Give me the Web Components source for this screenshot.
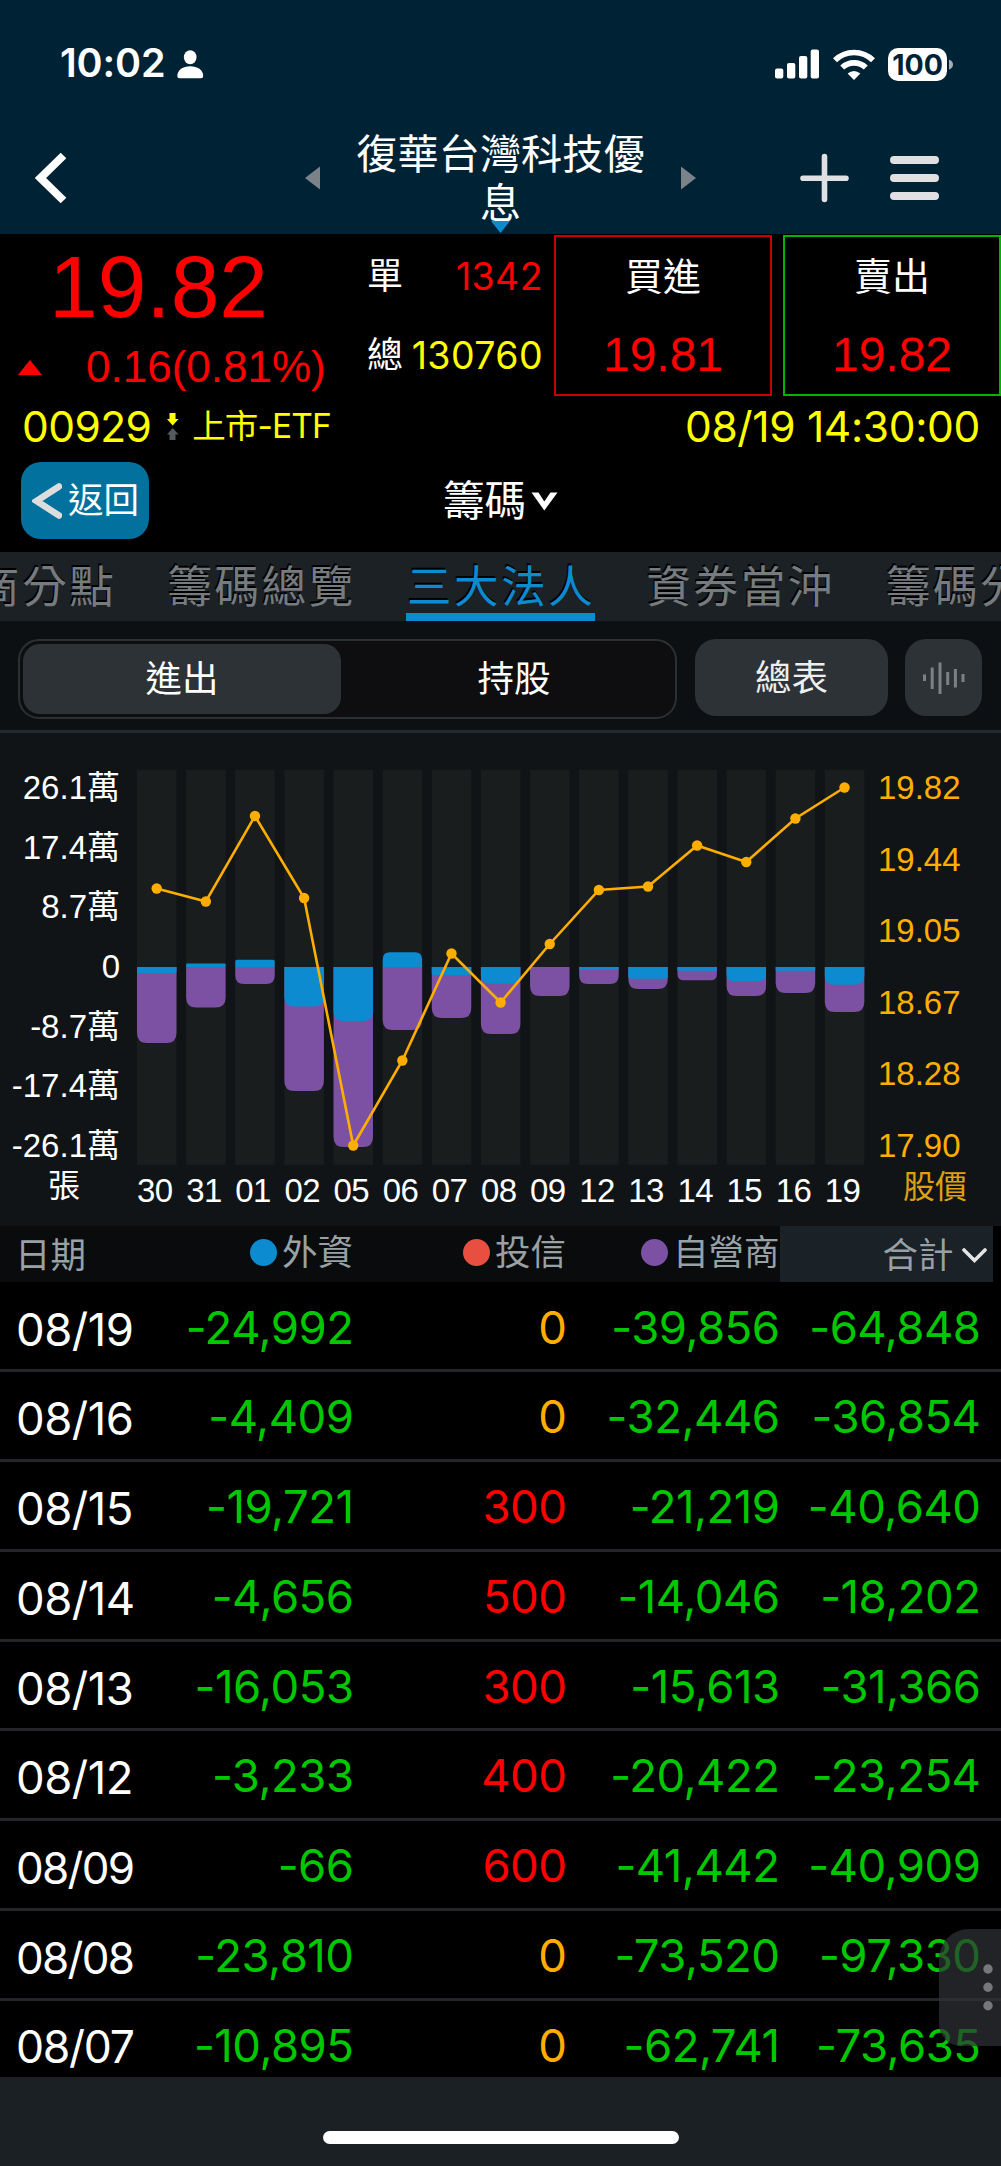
<!DOCTYPE html>
<html lang="zh-Hant">
<head>
<meta charset="utf-8">
<title>00929</title>
<style>
    body {
        margin: 0;
        width: 1001px;
        height: 2166px;
        overflow: hidden;
        background: #000;
        color: #fff;
        font-family: Inter, "Noto Sans CJK TC", sans-serif;
        font-size: 36px;
        line-height: 1;
    }
</style>
</head>
<body>
<stock-app></stock-app>

<script>
// Shared by all elements: make the template, attach the root, clone
const define = (name, html, setup) => {
    const template = document.createElement("template");
    template.innerHTML = html;

    customElements.define(name, class extends HTMLElement {
        constructor() {
            super();
            this.attachShadow({mode: "open"});
            this.shadowRoot.append(template.content.cloneNode(true));
        }

        connectedCallback() {
            if (setup) setup(this, this.shadowRoot);
        }
    });
};

define("status-bar", `
    <style>
        :host {
            display: flex;
            align-items: center;
            height: 128px;
            padding: 0 48px 0 60px;
        }
        .time {
            font-size: 39.5px;
            font-weight: 600;
            letter-spacing: -0.1px;
        }
        .person { margin-left: 11px; }
        .right {
            display: flex;
            align-items: center;
            margin-left: auto;
        }
        .wifi { margin: 0 13px 0 14px; }
        .battery {
            width: 59px;
            height: 33px;
            border-radius: 10px;
            background: #fff;
            color: #002235;
            font-size: 28.5px;
            font-weight: 700;
            line-height: 33px;
            text-align: center;
        }
        .cap { margin-left: 2px; }
        svg { display: block; }
    </style>
    <span class="time">10:02</span>
    <svg class="person" width="27" height="29" viewBox="0 0 27 29" fill="#fff">
        <ellipse cx="13.2" cy="7.3" rx="6.3" ry="7"/>
        <path d="M0.3 26C0.3 20 6 16.3 13.2 16.3S26.2 20 26.2 26Q26.2 28.3 24 28.3H2.5Q0.3 28.3 0.3 26Z"/>
    </svg>
    <div class="right">
        <svg width="44" height="30" viewBox="0 0 44 30" fill="#fff">
            <rect x="0" y="19.5" width="8.3" height="10" rx="2"/>
            <rect x="12" y="14" width="8.3" height="15.5" rx="2"/>
            <rect x="24" y="7" width="8.3" height="22.5" rx="2"/>
            <rect x="35.7" y="0.5" width="8.3" height="29" rx="2"/>
        </svg>
        <svg class="wifi" width="42" height="31" viewBox="0 0 42 31" fill="none" stroke="#fff">
            <path d="M2 11.3A27 27 0 0 1 40 11.3" stroke-width="5.6"/>
            <path d="M9.2 18.6A17 17 0 0 1 32.8 18.6" stroke-width="5.6"/>
            <path d="M21 31L14.6 24.6Q21 19.4 27.4 24.6Z" fill="#fff" stroke="none"/>
        </svg>
        <div class="battery">100</div>
        <svg class="cap" width="4" height="11" viewBox="0 0 4 11"><path d="M0 0.5Q4 2 4 5.5T0 10.5Z" fill="#a3aeb5"/></svg>
    </div>
`);

define("nav-bar", `
    <style>
        :host {
            display: grid;
            grid-template-columns: 1fr auto 1fr;
            align-items: center;
            box-sizing: border-box;
            height: 106px;
            padding: 0 62px 8px 35px;
        }
        svg { display: block; }
        .mid {
            display: flex;
            align-items: center;
            margin-left: 27px;
        }
        .title {
            position: relative;
            width: 293px;
            margin: 0 34px;
            padding-top: 2px;
            font-size: 41.2px;
            line-height: 49px;
            text-align: center;
        }
        .marker {
            position: absolute;
            left: 137px;
            top: 93px;
        }
        .right {
            display: flex;
            align-items: center;
            justify-content: flex-end;
            gap: 41px;
        }
    </style>
    <svg width="33" height="52" viewBox="0 0 33 52"><path d="M28.5 3.5L5.5 26L28.5 48.5" fill="none" stroke="#fff" stroke-width="8"/></svg>
    <div class="mid">
        <svg width="15" height="24"><path d="M15 0.5V23.5L0 12Z" fill="#7c8388"/></svg>
        <div class="title"><slot></slot>
            <svg class="marker" width="19" height="12"><path d="M0 0H19L9.5 12Z" fill="#0d8bd0"/></svg>
        </div>
        <svg width="15" height="24"><path d="M0 0.5V23.5L15 12Z" fill="#7c8388"/></svg>
    </div>
    <div class="right">
        <svg width="49" height="50" viewBox="0 0 49 50" stroke="#e0e0e2" stroke-width="5.6" stroke-linecap="round"><path d="M24.5 3.5V46.5M3 25.3H46"/></svg>
        <svg width="49" height="46" viewBox="0 0 49 46" stroke="#e0e0e2" stroke-width="8" stroke-linecap="round"><path d="M4 5H45M4 23H45M4 41H45"/></svg>
    </div>
`);

define("quote-box", `
    <style>
        :host {
            display: flex;
            flex-direction: column;
            align-items: center;
            box-sizing: border-box;
            height: 161px;
            padding-top: 15px;
            border: 2px solid var(--edge);
        }
        .label {
            font-size: 38px;
            line-height: 48px;
        }
        .price {
            margin-top: 29px;
            color: #f00;
            font: 48px/52px "Liberation Sans", sans-serif;
        }
    </style>
    <span class="label"><slot name="label"></slot></span>
    <span class="price"><slot></slot></span>
`);

define("quote-panel", `
    <style>
        :host { display: block; }
        .top {
            display: grid;
            grid-template-columns: 354px 178px 218px 218px;
            column-gap: 11px;
            width: 1001px;
            height: 163px;
        }
        .last {
            color: #f00;
            font-family: "Liberation Sans", sans-serif;
            white-space: nowrap;
        }
        .price {
            padding: 8px 0 0 49px;
            font-size: 87.5px;
            line-height: 90px;
        }
        .change {
            display: flex;
            align-items: center;
            gap: 44px;
            margin-top: 10px;
            padding-left: 18px;
            font-size: 44px;
            line-height: 50px;
        }
        .volume { margin-left: 2px; }
        .volume div {
            display: flex;
            justify-content: space-between;
            height: 79px;
            line-height: 85px;
            font-size: 37.5px;
        }
        .volume .n { letter-spacing: 0.4px; }
        .volume .k { font-size: 36px; }
        .r { color: #f00; }
        .y { color: #ff0; }
        .info {
            display: flex;
            align-items: center;
            height: 60px;
            padding: 0 21px 0 22px;
            color: #ff0;
            font-size: 42.5px;
            letter-spacing: -0.6px;
        }
        .market {
            font-size: 33.5px;
            letter-spacing: -0.9px;
        }
        .arrows { margin: 0 13px 0 16px; }
        .when {
            margin-left: auto;
            letter-spacing: -0.35px;
        }
        quote-box { margin-top: 1px; }
    </style>
    <div class="top">
        <div class="last">
            <div class="price">19.82</div>
            <div class="change">
                <svg width="24" height="15"><path d="M0 15L12 0L24 15Z" fill="#f00"/></svg>
                <span>0.16(0.81%)</span>
            </div>
        </div>
        <div class="volume">
            <div><span class="k">單</span><span class="n r">1342</span></div>
            <div><span class="k">總</span><span class="n y">130760</span></div>
        </div>
        <quote-box style="--edge: #c80000"><span slot="label">買進</span>19.81</quote-box>
        <quote-box style="--edge: #00b400"><span slot="label">賣出</span>19.82</quote-box>
    </div>
    <div class="info">
        <span>00929</span>
        <svg class="arrows" width="12" height="28" viewBox="0 0 12 28">
            <path d="M2.5 0H8.5V6H11.5L5.7 12.5L0 6H2.5Z" fill="#ff0"/>
            <path d="M5.7 15L11.5 21.5H8.5V27H2.5V21.5H0Z" fill="#55595c"/>
        </svg>
        <span class="market">上市-ETF</span>
        <span class="when">08/19 14:30:00</span>
    </div>
`);

define("page-bar", `
    <style>
        :host {
            display: grid;
            grid-template-columns: 1fr auto 1fr;
            align-items: start;
            height: 90px;
            padding: 5px 21px 0;
        }
        .back {
            display: flex;
            align-items: center;
            gap: 6px;
            box-sizing: border-box;
            width: 128px;
            height: 77px;
            padding-left: 11px;
            border-radius: 20px;
            background: #02719d;
            font-size: 35.5px;
        }
        .title {
            display: flex;
            align-items: center;
            gap: 5px;
            height: 79px;
            font-size: 41.5px;
        }
        svg { flex: none; }
    </style>
    <div class="back">
        <svg width="30" height="36" viewBox="0 0 30 36"><path d="M27 3.5L4.5 18L27 32.5" fill="none" stroke="#ddd" stroke-width="6.5" stroke-linecap="round"/></svg>
        <span>返回</span>
    </div>
    <div class="title">
        <span><slot></slot></span>
        <svg width="27" height="19" viewBox="0 0 27 19"><path d="M0.5 0.5H7.5L13.3 9.5L19.5 0.5H26.5L13.3 18.5Z" fill="#fff"/></svg>
    </div>
`);

define("tab-strip", `
    <style>
        :host {
            display: flex;
            justify-content: center;
            gap: 50.5px;
            height: 69px;
            overflow: hidden;
            background: #1b2124;
            color: #767b7f;
        }
        ::slotted(span) {
            flex: none;
            box-sizing: border-box;
            width: 189px;
            height: 69px;
            padding-left: 1px;
            font-size: 44.5px;
            line-height: 70px;
            letter-spacing: 2.6px;
            white-space: nowrap;
            text-shadow: -1px -2px 0 #000;
        }
        ::slotted(.on) {
            color: #0d8bd0;
            border-bottom: 8px solid #0d8bd0;
        }
    </style>
    <slot></slot>
`);

define("view-bar", `
    <style>
        :host {
            display: flex;
            box-sizing: border-box;
            height: 112px;
            padding: 18px 19px 0 18px;
            background: #0c1013;
            border-bottom: 3px solid #24292d;
            font-size: 36.5px;
        }
        .seg {
            display: grid;
            grid-template-columns: 318px 1fr;
            box-sizing: border-box;
            width: 659px;
            height: 80px;
            padding: 3px;
            border: 2px solid #2b3033;
            border-radius: 21px;
            background: #0e0e10;
        }
        .seg span, .btn {
            display: flex;
            align-items: center;
            justify-content: center;
        }
        .seg span { padding-top: 1px; }
        .seg span + span { padding-left: 15px; }
        .seg .on {
            border-radius: 17px;
            background: #2d3236;
        }
        .btn {
            box-sizing: border-box;
            width: 193px;
            height: 77px;
            margin-left: 18px;
            padding-top: 2px;
            border-radius: 21px;
            background: #2d3236;
            color: #eee;
        }
        .small {
            width: 77px;
            margin-left: 17px;
            padding-top: 0;
        }
    </style>
    <div class="seg"><span class="on">進出</span><span>持股</span></div>
    <div class="btn">總表</div>
    <div class="btn small">
        <svg width="43" height="32" viewBox="0 0 43 32" stroke="#7c8185" stroke-width="3"><path d="M2.5 12.5V19M10.2 5.5V27M18 0.5V32M25.7 10V23M33.4 7V25.5M41 12V20"/></svg>
    </div>
`);

define("flow-chart", `
    <style>
        :host {
            display: grid;
            grid-template-columns: 120px 739px 125px;
            height: 493px;
            background: #101417;
            font: 33px/1 "Liberation Sans", "Noto Sans CJK TC", sans-serif;
        }
        .middle { margin-left: 17px; }
        .axis {
            display: flex;
            flex-direction: column;
            justify-content: space-between;
            box-sizing: border-box;
            height: 391px;
            margin-top: 38px;
        }
        .left { align-items: flex-end; }
        .end { margin-left: 19px; }
        .right { color: #ffae00; }
        .unit {
            font-size: 32px;
            line-height: 36px;
            margin-top: 6px;
        }
        .left + .unit { padding-left: 48px; }
        .right + .unit {
            margin-top: 7px;
            padding-left: 25px;
            color: #dfa010;
        }
        .plot {
            display: block;
            margin-top: 36px;
        }
        .days {
            display: grid;
            grid-template-columns: repeat(15, 49.13px);
            margin-top: 9px;
            letter-spacing: -0.5px;
        }
        .axis span, .unit { white-space: nowrap; }
        .axis span { line-height: 33px; }
    </style>
    <div>
        <div class="axis left"></div>
        <div class="unit">張</div>
    </div>
    <div class="middle">
        <svg class="plot" width="729" height="396" viewBox="0 0 729 396"></svg>
        <div class="days"></div>
    </div>
    <div class="end">
        <div class="axis right"></div>
        <div class="unit">股價</div>
    </div>
`, (host, root) => {
    // [day, foreign up, foreign down, dealer down, price y]
    const days = [
        ["30", 0, 6, 76, 119.5], ["31", 3.5, 0, 40.5, 132.5], ["01", 7.3, 0, 17, 47],
        ["02", 0, 39.5, 124, 129], ["05", 0, 54, 180, 376.5], ["06", 14.7, 0, 63, 291.5],
        ["07", 0, 8, 51, 184.5], ["08", 0, 16.5, 67, 233.5], ["09", 0, 0, 29, 175],
        ["12", 0, 2.7, 17, 121], ["13", 0, 11.7, 22, 117.5], ["14", 0, 3.7, 13.3, 76.5],
        ["15", 0, 14, 29, 93], ["16", 0, 3.7, 26, 49.5], ["19", 0, 17.7, 45, 18.5],
    ];
    const zero = 198;
    const pitch = 49.13;
    const width = 39.5;

    // Bars are rounded on the end that is away from zero
    const bar = (x, h, dir, color) => {
        if (!h) return "";
        const r = h < 12 ? h / 4 : Math.min(10, h / 2);
        const end = zero + dir * h;
        const turn = end - dir * r;
        return `<path fill="${color}" d="M${x} ${zero}V${turn}Q${x} ${end} ${x + r} ${end}H${x + width - r}Q${x + width} ${end} ${x + width} ${turn}V${zero}Z"/>`;
    };

    let svg = "";
    days.forEach(([, up, down, dealer], i) => {
        const x = i * pitch;
        svg += `<rect x="${x}" y="0.7" width="${width}" height="395" fill="#191d1d"/>`;
        svg += bar(x, dealer, 1, "#7c50a3");
        svg += bar(x, up, -1, "#0d8bd0");
        svg += bar(x, down, 1, "#0d8bd0");
    });
    const points = days.map((d, i) => [i * pitch + 19.7, d[4]]);
    svg += `<polyline points="${points.join(" ")}" fill="none" stroke="#ffae00" stroke-width="2.6"/>`;
    points.forEach(([x, y]) => {
        svg += `<circle cx="${x}" cy="${y}" r="5.2" fill="#ffae00"/>`;
    });
    root.querySelector(".plot").innerHTML = svg;

    const spans = (items) => items.map((t) => `<span>${t}</span>`).join("");
    root.querySelector(".days").innerHTML = spans(days.map((d) => d[0]));
    root.querySelector(".left").innerHTML = spans(["26.1萬", "17.4萬", "8.7萬", "0", "-8.7萬", "-17.4萬", "-26.1萬"]);
    root.querySelector(".right").innerHTML = spans(["19.82", "19.44", "19.05", "18.67", "18.28", "17.90"]);
});

define("trade-row", `
    <style>
        :host {
            display: grid;
            grid-template-columns: 134.5px 203px 213px 213px 201px;
            align-items: center;
            box-sizing: border-box;
            height: 89.75px;
            padding: 3px 0 0 16px;
            border-bottom: 3px solid #252428;
            font-size: 45.5px;
            letter-spacing: -0.5px;
        }
        .v { text-align: right; }
        .date { padding-top: 4px; }
        /* Wide dates are squeezed to fit their column */
        :host([tight]) .date {
            font-size: 44px;
            letter-spacing: -1.7px;
        }
        :host([tight="less"]) .date {
            font-size: 44.5px;
            letter-spacing: -1.3px;
        }
        .down { color: #00c800; }
        .up { color: #f00; }
        .flat { color: #ffae00; }
    </style>
`, (host, root) => {
    host.getAttribute("values").split(" ").forEach((text, i) => {
        const span = document.createElement("span");
        span.textContent = text;
        if (i === 0) {
            span.className = "date";
        } else {
            span.className = "v " + (text === "0" ? "flat" : text[0] === "-" ? "down" : "up");
        }
        root.append(span);
    });
});

define("trade-table", `
    <style>
        :host {
            display: block;
            height: 851px;
            overflow: hidden;
        }
        .head {
            display: grid;
            grid-template-columns: 150px 203px 213px 213.5px 213px;
            width: 992.5px;
            height: 56px;
            margin-bottom: 0.6px;
            background: #090b0c;
            color: #98a2a6;
            font-size: 35.5px;
            line-height: 53px;
        }
        .head div {
            display: flex;
            align-items: center;
            justify-content: flex-end;
            height: 53px;
            white-space: nowrap;
        }
        .head div.date {
            justify-content: flex-start;
            padding: 3px 0 0 15px;
        }
        .head div.sum {
            gap: 8px;
            padding: 3px 6px 0 0;
            background: #1a2127;
        }
        .dot::before {
            content: "";
            width: 27px;
            height: 27px;
            margin-right: 5px;
            border-radius: 50%;
            background: var(--dot);
        }
    </style>
    <div class="head">
        <div class="date">日期</div>
        <div class="dot" style="--dot: #0d8bd0">外資</div>
        <div class="dot" style="--dot: #e94f40">投信</div>
        <div class="dot" style="--dot: #7c50a3">自營商</div>
        <div class="sum">合計
            <svg width="25" height="16" viewBox="0 0 25 16"><path d="M2 2L12.5 12.5L23 2" fill="none" stroke="#e4e4e4" stroke-width="3.6" stroke-linecap="round"/></svg>
        </div>
    </div>
    <trade-row values="08/19 -24,992 0 -39,856 -64,848"></trade-row>
    <trade-row values="08/16 -4,409 0 -32,446 -36,854"></trade-row>
    <trade-row values="08/15 -19,721 300 -21,219 -40,640"></trade-row>
    <trade-row values="08/14 -4,656 500 -14,046 -18,202"></trade-row>
    <trade-row values="08/13 -16,053 300 -15,613 -31,366"></trade-row>
    <trade-row values="08/12 -3,233 400 -20,422 -23,254"></trade-row>
    <trade-row tight values="08/09 -66 600 -41,442 -40,909"></trade-row>
    <trade-row tight values="08/08 -23,810 0 -73,520 -97,330"></trade-row>
    <trade-row tight="less" values="08/07 -10,895 0 -62,741 -73,635"></trade-row>
`);

// Floating handle, lies over the table
define("side-handle", `
    <style>
        :host {
            position: absolute;
            right: 0;
            top: 1929px;
            width: 62px;
            height: 117px;
            border-radius: 30px 0 0 22px;
            background: rgba(48, 52, 56, 0.68);
        }
        svg { display: block; }
    </style>
    <svg width="62" height="117" fill="#75787b">
        <circle cx="49" cy="40" r="4.7"/>
        <circle cx="49" cy="58.3" r="4.7"/>
        <circle cx="49" cy="76.7" r="4.7"/>
    </svg>
`);

define("home-bar", `
    <style>
        :host {
            display: flex;
            justify-content: center;
            align-items: flex-start;
            box-sizing: border-box;
            height: 89px;
            padding-top: 54px;
            background: #1a2023;
        }
        div {
            width: 356px;
            height: 13px;
            border-radius: 7px;
            background: #fff;
        }
    </style>
    <div></div>
`);

define("stock-app", `
    <style>
        :host {
            display: block;
            position: relative;
            width: 1001px;
            height: 2166px;
        }
        header { background: #002235; }
    </style>
    <header>
        <status-bar></status-bar>
        <nav-bar>復華台灣科技優息</nav-bar>
    </header>
    <quote-panel></quote-panel>
    <page-bar>籌碼</page-bar>
    <tab-strip>
        <span>券商分點</span>
        <span>籌碼總覽</span>
        <span class="on">三大法人</span>
        <span>資券當沖</span>
        <span>籌碼分布</span>
    </tab-strip>
    <view-bar></view-bar>
    <flow-chart></flow-chart>
    <trade-table></trade-table>
    <home-bar></home-bar>
    <side-handle></side-handle>
`);
</script>
</body>
</html>
